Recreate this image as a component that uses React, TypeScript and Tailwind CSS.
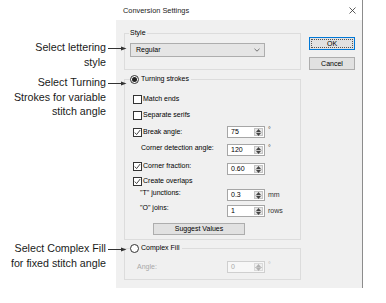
import React from 'react';

const liftCls: Record<number, string> = { 0: '', 2: 'pb-[4px]', 3: 'pb-[6px]' };

// left-hand callout with arrow pointing into the dialog
const Note = ({ lines }: { lines: string[] }) => (
  <div className="flex items-start">
    <div className="w-[106px] shrink-0 text-right">
      {lines.map((l, i) => (
        <div key={i} className="whitespace-nowrap">{l}</div>
      ))}
    </div>
    <svg width="20" height="15" viewBox="0 0 20 15" className="relative z-10 ml-[2px] shrink-0">
      <line x1="0" y1="8.5" x2="15" y2="8.5" stroke="#333" strokeWidth="1" />
      <polygon points="13,6.6 18.5,8.5 13,10.4" fill="#333" />
    </svg>
  </div>
);

const Check = ({ on }: { on?: boolean }) => (
  <span className="w-[9px] h-[9px] shrink-0 border border-[#333] bg-white flex items-center justify-center">
    {on && (
      <svg width="7" height="7" viewBox="0 0 7 7">
        <polyline points="0.8,3.6 2.6,5.6 6.2,1" fill="none" stroke="#333" strokeWidth="0.9" />
      </svg>
    )}
  </span>
);

const Radio = ({ on }: { on?: boolean }) => (
  <span className="w-[9px] h-[9px] shrink-0 rounded-full border border-[#333] bg-white flex items-center justify-center">
    {on && <span className="w-[5px] h-[5px] rounded-full bg-[#222]" />}
  </span>
);

const CheckRow = ({ label, on, className = '' }: { label: string; on?: boolean; className?: string }) => (
  <div className={`flex items-center h-[10px] gap-[1px] ${className}`}>
    <Check on={on} />
    <span className="whitespace-nowrap">{label}</span>
  </div>
);

const Spin = ({ value, disabled }: { value: string; disabled?: boolean }) => (
  <div className={`flex h-[12px] w-[38px] shrink-0 border ${disabled ? 'border-[#cfcfcf] bg-[#f7f7f7] text-[#a8a8a8]' : 'border-[#a6a6a6] bg-white'}`}>
    <div className="w-[26px] pl-[3px] flex items-center">{value}</div>
    <div className={`flex-1 my-[1px] mr-[1px] flex flex-col border ${disabled ? 'border-[#dadada] bg-[#efefef]' : 'border-[#c4c4c4] bg-[#e6e6e6]'}`}>
      <div className="flex-1 flex items-center justify-center border-b border-[#c4c4c4]">
        <svg width="5" height="3" viewBox="0 0 5 3"><polygon points="0,3 2.5,0 5,3" fill={disabled ? '#b0b0b0' : '#444'} /></svg>
      </div>
      <div className="flex-1 flex items-center justify-center">
        <svg width="5" height="3" viewBox="0 0 5 3"><polygon points="0,0 2.5,3 5,0" fill={disabled ? '#b0b0b0' : '#444'} /></svg>
      </div>
    </div>
  </div>
);

const SpinRow = ({
  label, value, unit, check, indent, lift = 0, disabled, className = '',
}: {
  label: string; value: string; unit?: string; check?: boolean; indent?: string;
  lift?: number; disabled?: boolean; className?: string;
}) => (
  <div className={`flex items-center h-[12px] ${className}`}>
    <div className={`w-[94px] shrink-0 flex items-center gap-[1px] ${indent ?? ''} ${liftCls[lift]} ${disabled ? 'text-[#a8a8a8]' : ''}`}>
      {check !== undefined && <Check on={check} />}
      <span className="whitespace-nowrap">{label}</span>
    </div>
    <Spin value={value} disabled={disabled} />
    {unit && (
      <span className={`ml-[3px] whitespace-nowrap ${unit === '°' ? 'pb-[4px]' : ''} ${disabled ? 'text-[#b8b8b8]' : 'text-[#333]'}`}>{unit}</span>
    )}
  </div>
);

export default function App() {
  return (
    <div className="w-[386px] h-[303px] bg-white flex overflow-hidden font-['Liberation_Sans',Arial,sans-serif]">
      {/* callouts */}
      <div className="w-[116px] shrink-0 pt-[40px] text-[10.7px] leading-[14.5px] text-[#1a1a1a]">
        <Note lines={['Select lettering', 'style']} />
        <div className="mt-[6px]">
          <Note lines={['Select Turning', 'Strokes for variable', 'stitch angle']} />
        </div>
        <div className="mt-[122.5px]">
          <Note lines={['Select Complex Fill', 'for fixed stitch angle']} />
        </div>
      </div>

      {/* dialog */}
      <div className="w-[247px] h-[288px] shrink-0 flex flex-col border-r border-[#8c8c8c] text-[7px] leading-[10px] text-black">
        <div className="h-[20px] shrink-0 bg-white flex items-center pl-[7px] pr-[6px] pt-[2px]">
          <span className="text-[7.4px] text-[#222]">Conversion Settings</span>
          <svg width="7" height="7" viewBox="0 0 7 7" className="ml-auto -mt-[2px]">
            <path d="M0.5 0.5 L6.5 6.5 M6.5 0.5 L0.5 6.5" stroke="#333" strokeWidth="0.8" />
          </svg>
        </div>

        <div className="flex-1 bg-[#f0f0f0] flex pl-[8px] gap-[8px]">
          <div className="w-[177px] shrink-0 flex flex-col">
            <fieldset className="mt-[8px] border border-[#dcdcdc]">
              <legend className="ml-[4px] px-[1px] h-[10px] leading-[10px]">Style</legend>
              <div className="pl-[5px] pt-[5px] pb-[12px]">
                <div className="w-[135px] h-[14px] flex items-center justify-between pl-[5px] pr-[4px] border border-[#adadad] bg-[#e5e5e5]">
                  <span>Regular</span>
                  <svg width="6" height="4" viewBox="0 0 6 4">
                    <polyline points="0.5,0.8 3,3.2 5.5,0.8" fill="none" stroke="#555" strokeWidth="0.8" />
                  </svg>
                </div>
              </div>
            </fieldset>

            <fieldset className="mt-[3px] border border-[#dcdcdc]">
              <legend className="ml-[5px] pr-[2px] h-[12px] flex items-center gap-[2px]">
                <Radio on />
                <span>Turning strokes</span>
              </legend>
              <div className="pl-[8px] pt-[9px] pb-[4px] flex flex-col">
                <CheckRow label="Match ends" />
                <CheckRow label="Separate serifs" className="mt-[6px]" />
                <SpinRow label="Break angle:" check value="75" unit="°" className="mt-[6px]" />
                <SpinRow label="Corner detection angle:" indent="pl-[8px]" lift={2} value="120" unit="°" className="mt-[6px]" />
                <SpinRow label="Corner fraction:" check lift={3} value="0.60" className="mt-[7px]" />
                <CheckRow label="Create overlaps" on className="mt-[1px]" />
                <SpinRow label={'"T" junctions:'} indent="pl-[7px]" lift={2} value="0.3" unit="mm" className="mt-[3px]" />
                <SpinRow label={'"O" joins:'} indent="pl-[7px]" lift={3} value="1" unit="rows" className="mt-[4px]" />
                <div className="mt-[6px] ml-[20px] w-[92px] h-[12px] flex items-center justify-center border border-[#adadad] bg-[#e1e1e1]">
                  Suggest Values
                </div>
              </div>
            </fieldset>

            <fieldset className="mt-[2px] border border-[#dcdcdc]">
              <legend className="ml-[5px] pr-[2px] h-[12px] flex items-center gap-[2px]">
                <Radio />
                <span>Complex Fill</span>
              </legend>
              <div className="pl-[8px] pt-[7px] pb-[6px]">
                <SpinRow label="Angle:" indent="pl-[4px]" value="0" unit="°" disabled />
              </div>
            </fieldset>
          </div>

          <div className="w-[46px] shrink-0 flex flex-col pt-[17px]">
            <div className="h-[13px] flex items-center justify-center border border-[#0078d7] bg-[#e1e1e1] outline-1 outline-dotted outline-[#555] -outline-offset-[3px]">
              OK
            </div>
            <div className="mt-[7px] h-[13px] flex items-center justify-center border border-[#adadad] bg-[#e1e1e1]">
              Cancel
            </div>
          </div>
        </div>
      </div>
    </div>
  );
}
